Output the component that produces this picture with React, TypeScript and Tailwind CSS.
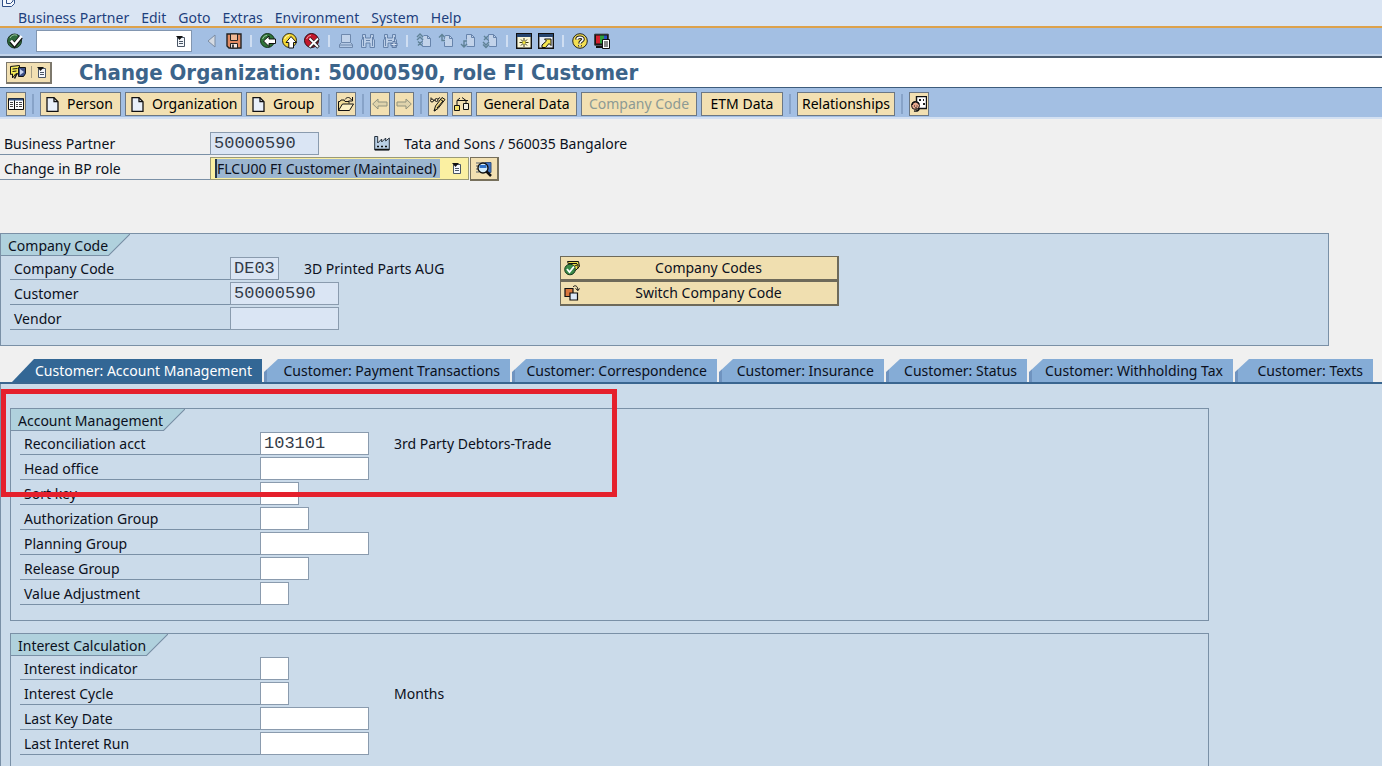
import type { ReactNode } from "react";

const line = "border-[#7a90a6]";

function Svg({ children, w = 16 }: { children: ReactNode; w?: number }) {
  return (
    <svg width={w} height="16" viewBox={`0 0 ${w} 16`} fill="none" stroke="#111" strokeWidth="1" aria-hidden="true">
      {children}
    </svg>
  );
}

const CheckIcon = () => (
  <Svg>
    <circle cx="7.500" cy="8" r="7" fill="#2f6b3c" stroke="#1c3524" />
    <path d="M3 5A6 6 0 0 1 10 2.200" stroke="#9cc7a0" />
    <path d="M4 8l3.500 4L14 4" stroke="#111" strokeWidth="4.500" />
    <path d="M4 7.500l3.500 4L14.500 3" stroke="#fff" strokeWidth="2.600" />
  </Svg>
);
const TriangleIcon = () => (
  <Svg>
    <path d="M11 2v12L4 8z" fill="#d5dbe3" stroke="#7b8ca3" />
  </Svg>
);
const SaveIcon = () => (
  <Svg>
    <path d="M1 1h14v14H3L1 13z" fill="#e08a62" stroke="#222" strokeWidth="1.400" />
    <path d="M4.500 1h7v6.500h-7z" fill="#f0b896" stroke="#222" />
    <path d="M4.500 15v-4.500h7V15z" fill="#f4e6df" stroke="#222" />
    <path d="M6 11.500h2V15H6z" fill="#444" stroke="none" />
  </Svg>
);
const BackIcon = () => (
  <Svg>
    <circle cx="7.500" cy="7.500" r="7" fill="#2f7438" stroke="#14301b" />
    <path d="M2.500 6A5.500 5.500 0 0 1 7 2.200" stroke="#9cc7a0" />
    <path d="M3.500 8L9 3v3h6.500v4.500H9v3z" fill="#fff" stroke="#111" />
  </Svg>
);
const UpIcon = () => (
  <Svg>
    <circle cx="7.500" cy="7.500" r="7" fill="#f5d936" stroke="#2c2810" />
    <path d="M2.500 6A5.500 5.500 0 0 1 7 2.200" stroke="#fdf5b8" />
    <path d="M9 3.500l5.500 6h-3V15H6.800V9.500H4z" fill="#fff" stroke="#111" />
  </Svg>
);
const ExitIcon = () => (
  <Svg>
    <circle cx="7.500" cy="7.500" r="7" fill="#c2182c" stroke="#2e0a10" />
    <path d="M2.500 6A5.500 5.500 0 0 1 7 2.200" stroke="#ee9aa4" />
    <path d="M5.500 5.500l9 9m0-9l-9 9" stroke="#222" strokeWidth="3.500" />
    <path d="M5.500 5.500l8.500 8.500m0-8.500l-8.500 8.500" stroke="#fff" strokeWidth="1.800" />
  </Svg>
);
const PrintIcon = () => (
  <Svg>
    <path d="M3.500 9.500V1.500h9v8" stroke="#6f89ad" fill="#c2d3ea" />
    <path d="M3.500 9.500h9l2 2v3h-13v-3zM1.500 12h13" stroke="#6f89ad" fill="#b3c8e4" />
  </Svg>
);
const Binoculars = () => (
  <path d="M2.500 1.500h3V5h5V1.500h3V6l1 1v7.500H10V10H6v4.500H1.500V7l1-1zM6 7.500h4M3.500 4v9M12.500 4v9" stroke="#6784ac" fill="#bccfe8" />
);
const FindIcon = () => (
  <Svg>
    <Binoculars />
  </Svg>
);
const FindNextIcon = () => (
  <Svg>
    <Binoculars />
    <path d="M12 8v7M8.500 11.500h7" stroke="#5e7ba5" strokeWidth="3" />
    <path d="M12 9v5M9.500 11.500h5" stroke="#dbe6f5" />
  </Svg>
);
function PageIcon({ arrows, low }: { arrows: string; low?: boolean }) {
  return (
    <Svg>
      <path d={low ? "M6.500 13.500v-12h5l3 3v9z" : "M6.500 13.500v-11h5l3 3v8z"} stroke="#6784ac" fill="#c2d3ea" />
      <path d={low ? "M11.500 1.500v3h3" : "M11.500 2.500v3h3"} stroke="#6784ac" />
      <path d={arrows} stroke="#a3bfe4" strokeWidth="3" />
      <path d={arrows} stroke="#5f8296" strokeWidth="1.400" />
    </Svg>
  );
}
const FirstPageIcon = () => <PageIcon arrows="M1 4l3-3 3 3M1 7l3-3 3 3M2 8.500l4 4M6 8.500l-4 4" />;
const PrevPageIcon = () => <PageIcon arrows="M1 4.500l3-3 3 3M4 2v5.500h3" />;
const NextPageIcon = () => <PageIcon low arrows="M1 11l3 3 3-3M4 13.500V8h3" />;
const LastPageIcon = () => <PageIcon low arrows="M2 3l4 4M6 3l-4 4M1 9l3 3 3-3M1 11.500l3 3 3-3" />;
const NewSessionIcon = () => (
  <Svg>
    <path d="M.7.700h14.600v14.600H.7z" fill="#fbf7d6" stroke="#111" strokeWidth="1.400" />
    <path d="M1 1h14v3H1z" fill="#26456f" stroke="none" />
    <path d="M8 5v9M3.500 9.500h9M5 6.500l6 6m0-6l-6 6" stroke="#3c3b10" />
    <circle cx="8" cy="9.500" r="1.500" fill="#f1e53c" stroke="none" />
  </Svg>
);
const ShortcutIcon = () => (
  <Svg>
    <path d="M.7.700h14.600v14.600H.7z" fill="#e7edf5" stroke="#111" strokeWidth="1.400" />
    <path d="M1 1h14v3H1z" fill="#26456f" stroke="none" />
    <path d="M4 14.500V12l4.500-4L6.500 6h6.500v6.500l-2-2L7.500 14.500z" fill="#f5e650" stroke="#111" />
  </Svg>
);
const HelpIcon = () => (
  <Svg>
    <circle cx="8" cy="8" r="7.300" fill="#f3df52" stroke="#222" />
    <path d="M5 6.500C5 3.500 11 3.500 11 6.200 11 8.200 8 8 8 10.500M8 12v1.500" stroke="#222" strokeWidth="3.600" />
    <path d="M5 6.500C5 3.500 11 3.500 11 6.200 11 8.200 8 8 8 10.500M8 12v1.500" stroke="#fff" strokeWidth="1.600" />
  </Svg>
);
const MonitorIcon = () => (
  <Svg>
    <path d="M.7 1.200h13.600v11H.7z" fill="#111" stroke="#333" />
    <path d="M2 2.500h4v8H2z" fill="#d6202e" stroke="none" />
    <path d="M6 2.500h4v8H6z" fill="#2e9f3c" stroke="none" />
    <path d="M10 2.500h3v8h-3z" fill="#274fc0" stroke="none" />
    <path d="M2 14h7" strokeWidth="2" />
    <path d="M8.500 6.500h7v9h-7z" fill="#fff" />
    <path d="M10 9h4M10 11h4M10 13h4" />
  </Svg>
);
const DropIcon = () => (
  <svg width="10" height="11" viewBox="0 0 10 11" fill="none" stroke="#4a5665" aria-hidden="true">
    <path d="M1.500 1.500h7v9h-7z" fill="#f5f8fc" />
    <path d="M3 5.500h4M3 7.500h4" />
    <path d="M0 0h7L3.500 4z" fill="#111" stroke="none" />
  </svg>
);
const ServicesIcon = () => (
  <Svg>
    <path d="M.5 2.500l9-1v8l-4 .5-3 4v-4l-2 .500z" fill="#f3ea58" />
    <path d="M2.500 5l5-.500M2.500 7.500l4-.500" />
    <path d="M8.500 3.500h7v6l-2 3h-5z" fill="#3c4f86" />
    <path d="M10 5l4 3-4 3z" fill="#c9d4ee" stroke="none" />
    <path d="M7 9.500l-2.500 5" strokeWidth="1.500" />
  </Svg>
);
const LayoutIcon = () => (
  <Svg>
    <path d="M.5 2.500h15v11H.5zM6.500 2.500v11" fill="#fff" />
    <path d="M1 3.500h14" stroke="#33507c" strokeWidth="2" />
    <path d="M2 6.500h3M2 8.500h3M2 10.500h3M8 6.500h2m1 0h3M8 8.500h2m1 0h3M8 10.500h2m1 0h3" stroke="#444" />
  </Svg>
);
const NewIcon = () => (
  <svg width="13" height="15" viewBox="0 0 13 15" fill="none" stroke="#111" aria-hidden="true">
    <path d="M1 .700h7l4 4v9.600H1z" fill="#eaf1fa" strokeWidth="1.300" />
    <path d="M8 .700v4h4" strokeWidth="1.300" />
  </svg>
);
const OpenIcon = () => (
  <Svg>
    <path d="M.5 14.500V5.500h1.500l1-1.500h3l1 1.500h4v2" fill="#f0dc9a" />
    <path d="M.5 14.500l4-6.500h11l-4 6.500z" fill="#fbf0c4" />
    <path d="M7 3.500c2-3 5-2.500 6.500.500M14.500 1v4h-4" />
  </Svg>
);
const LeftIcon = () => (
  <Svg>
    <path d="M.7 8L6 3v3h9v4H6v3z" fill="#dfd3ac" stroke="#91937f" />
  </Svg>
);
const RightIcon = () => (
  <Svg>
    <path d="M15.300 8L10 3v3H1v4h9v3z" fill="#dfd3ac" stroke="#91937f" />
  </Svg>
);
const EditIcon = () => (
  <Svg>
    <path d="M4 15l1.500-5L12 1.500l3 2-7 9z" fill="#f2d98a" />
    <path d="M4 15l2-1M10.500 3.500l3 2M7 12l6-7" />
    <circle cx="2" cy="4.500" r="1.500" />
    <circle cx="6.500" cy="4" r="1.500" />
    <path d="M3.500 4.500L5 4M8 3l2-1.500M1 3V1.500" />
  </Svg>
);
const HierarchyIcon = () => (
  <Svg>
    <path d="M.5 9.500h5v5h-5z" fill="#f5e26a" />
    <path d="M9.500 7.500h5v6h-5z" fill="#f3efe0" />
    <path d="M3 9V4.500h7M6 2l-3 2.500M8 1.500l4 3V7M10 4.500h4" />
  </Svg>
);
const RoleIcon = () => (
  <Svg>
    <path d="M5.500.500h10v12h-10z" fill="#fff" strokeWidth="1.400" />
    <path d="M8 3h2v2H8zM12 3h1v2h-1zM12 7h2v2h-2z" fill="#222" stroke="none" />
    <circle cx="4.500" cy="9.500" r="4" fill="#e9a98d" />
    <path d="M1 9c1-4 5-4 7-1M3 15c3 .500 5-.500 5.500-3" strokeWidth="1.400" />
    <path d="M3 10h1M5.500 10h1M4 12h2" />
  </Svg>
);
const FactoryIcon = () => (
  <Svg>
    <path d="M.7 15V1.500h3V8l4-4v3l4-4v3l3.600-3v12z" fill="#b9cfe6" stroke="#26303c" />
    <path d="M1 14.500h14M3 11.500h2m2 0h2m2 0h2" strokeWidth="1.500" />
  </Svg>
);
const SearchPageIcon = () => (
  <Svg>
    <path d="M0 2h9M0 5h2M0 8h2M0 11h3" stroke="#55606e" />
    <path d="M9 1.500h6v10H9z" fill="#3f73c4" stroke="#33507c" />
    <circle cx="7" cy="7" r="5" fill="#d3ecfa" strokeWidth="1.400" />
    <path d="M3.500 5.500h7" stroke="#2f72c9" strokeWidth="3" />
    <path d="M10.500 10.500l4.500 4.500" strokeWidth="2.500" />
  </Svg>
);
const CheckCodesIcon = () => (
  <Svg>
    <path d="M3.500 1.500h11l1 5-4 4-5-1z" fill="#e6d94a" />
    <path d="M5 3.500h8M10 6.500l4-2v4" />
    <circle cx="6" cy="9.500" r="5.300" fill="#3a8a48" stroke="#173a1f" />
    <path d="M3 9l2.500 3L10 6.500" stroke="#fff" strokeWidth="1.800" />
  </Svg>
);
const SwitchIcon = () => (
  <Svg>
    <path d="M1 3.500h8v8H1z" fill="#d9773d" strokeWidth="1.200" />
    <path d="M6 8h7.500v7H6z" fill="#dbe8f7" strokeWidth="1.200" />
    <path d="M9 2c2-2.500 5-1 5 3.500M11.500 3.500l2.500 2 1.500-2" />
  </Svg>
);

const mainTools: ([string, () => ReactNode] | null)[] = [
  ["Collapse", TriangleIcon],
  ["Save", SaveIcon],
  null,
  ["Back", BackIcon],
  ["Exit", UpIcon],
  ["Cancel", ExitIcon],
  null,
  ["Print", PrintIcon],
  ["Find", FindIcon],
  ["Find next", FindNextIcon],
  null,
  ["First page", FirstPageIcon],
  ["Previous page", PrevPageIcon],
  ["Next page", NextPageIcon],
  ["Last page", LastPageIcon],
  null,
  ["New session", NewSessionIcon],
  ["Create shortcut", ShortcutIcon],
  null,
  ["Help", HelpIcon],
  ["Customize layout", MonitorIcon],
];

function ToolButton({ label, children }: { label: string; children: ReactNode }) {
  return (
    <button aria-label={label} className="flex h-6 w-5 shrink-0 items-center justify-center border border-[#6b7784] bg-[#f2e0b2]">
      {children}
    </button>
  );
}

function TextButton({ text, width, page, disabled }: { text: string; width: string; page?: boolean; disabled?: boolean }) {
  return (
    <button
      disabled={disabled}
      className={`flex h-6 shrink-0 items-center border border-[#6b7784] bg-[#f2e0b2] whitespace-nowrap ${width} ${page ? "gap-2 pl-[5px]" : "justify-center"} ${disabled ? "text-[#8c9a94]" : "text-black"}`}
    >
      {page && <NewIcon />}
      {text}
    </button>
  );
}

const Divider = () => (
  <span className="flex h-5 w-[6px] shrink-0 justify-center">
    <span className="w-[2px] bg-[#87a3c8]" />
  </span>
);

type FieldProps = {
  id: string;
  label: string;
  labelWidth: string;
  width: string;
  value?: string;
  readOnly?: boolean;
  note?: string;
  noteGap?: string;
};

function Field({ id, label, labelWidth, width, value = "", readOnly, note, noteGap = "" }: FieldProps) {
  return (
    <div className="flex h-[23px] items-stretch">
      <label htmlFor={id} className={`shrink-0 border-b pl-1 leading-6 whitespace-nowrap ${line} ${labelWidth}`}>
        {label}
      </label>
      <input
        id={id}
        defaultValue={value}
        readOnly={readOnly}
        className={`shrink-0 border border-[#8a9bae] pl-[3px] font-['Liberation_Mono',monospace] text-[17px] leading-5 text-[#333b48] outline-none ${width} ${readOnly ? "bg-[#dae5f4]" : "bg-white"}`}
      />
      {note && <span className={`leading-6 whitespace-nowrap ${noteGap}`}>{note}</span>}
    </div>
  );
}

function Group({ title, children, className }: { title: string; children: ReactNode; className: string }) {
  return (
    <section className={`border bg-[#cbdbea] ${line} ${className}`}>
      <header className="flex h-[22px]">
        <h2 className={`border-b bg-[#b0d1dd] pl-[7px] leading-6 whitespace-nowrap ${line}`}>{title}</h2>
        <span className="w-[22px] bg-[linear-gradient(to_bottom_right,#b0d1dd_calc(50%-1px),#7a90a6_50%,transparent_calc(50%+1px))]" />
      </header>
      {children}
    </section>
  );
}

const tabs = [
  { text: "Payment Transactions", width: "w-[246px]" },
  { text: "Correspondence", width: "w-[205px]" },
  { text: "Insurance", width: "w-[165px]" },
  { text: "Status", width: "w-[141px]" },
  { text: "Withholding Tax", width: "w-[204px]" },
  { text: "Texts", width: "w-[138px]" },
];

export default function App() {
  return (
    <div className="flex min-h-screen flex-col overflow-hidden bg-[#f0f0f0] font-['Noto_Sans',sans-serif] text-sm text-[#0b1020]">
      <div className="h-2 bg-[#dae5f3] pl-[2px]">
        <svg width="14" height="8" viewBox="0 0 14 8" fill="none" stroke="#2f4f86" aria-hidden="true">
          <path d="M.5 0v6.500h9L12.500 3.500V0M4.500 0v3.500h4L11 1V0" fill="#f4f8fd" />
        </svg>
      </div>
      <nav className="flex h-[18px] items-start gap-3 bg-[#dae5f3] pl-[18px] text-[#1d3f7d]">
        {["Business Partner", "Edit", "Goto", "Extras", "Environment", "System", "Help"].map((m) => (
          <button key={m} className="leading-5">
            {m}
          </button>
        ))}
      </nav>

      <div className="flex h-[30px] items-center border-t-2 border-b-2 border-t-[#dda24b] border-b-[#c3d5ec] bg-[#a3bfe3]">
        <button aria-label="Enter" className="flex w-9 justify-center pr-[6px]">
          <CheckIcon />
        </button>
        <div className="flex h-[22px] w-[156px] items-center border border-[#8296b0] bg-white pr-[5px]">
          <input aria-label="Command" className="min-w-0 flex-1 pl-1 outline-none" />
          <DropIcon />
        </div>
        <span className="w-[9px]" />
        {mainTools.map((t, i) => {
          if (!t) {
            return (
              <span key={i} className="flex w-3 justify-center">
                <span className="h-3 w-[2px] bg-[#cfdef2]" />
              </span>
            );
          }
          const Icon = t[1];
          return (
            <button key={i} aria-label={t[0]} className="flex w-[22px] justify-center">
              <Icon />
            </button>
          );
        })}
      </div>

      <header className="flex h-8 items-center border-t-2 border-b border-t-[#4b5c70] border-b-[#3d5c7c] bg-white pl-[6px]">
        <button aria-label="Services for object" className="flex h-[22px] w-[46px] items-center border border-r-2 border-b-2 border-[#7d786c] bg-[#f2e0b2] pl-[3px]">
          <ServicesIcon />
          <span className="mx-[5px] h-3 w-px bg-[#a79f85]" />
          <DropIcon />
        </button>
        <h1 className="pl-[27px] font-['DejaVu_Sans_Condensed',sans-serif] text-[22px] leading-7 font-bold whitespace-nowrap text-[#3c648a]">
          Change Organization: 50000590, role FI Customer
        </h1>
      </header>

      <div className="flex h-[31px] items-center gap-1 border-b-2 border-[#d3e0f2] bg-[#a3bfe3] pt-[3px] pl-[6px]">
        <ToolButton label="Locator">
          <LayoutIcon />
        </ToolButton>
        <Divider />
        <TextButton page text="Person" width="w-[81px]" />
        <TextButton page text="Organization" width="w-[117px]" />
        <TextButton page text="Group" width="w-[76px]" />
        <Divider />
        <ToolButton label="Open">
          <OpenIcon />
        </ToolButton>
        <Divider />
        <ToolButton label="Previous partner">
          <LeftIcon />
        </ToolButton>
        <ToolButton label="Next partner">
          <RightIcon />
        </ToolButton>
        <Divider />
        <ToolButton label="Display or change">
          <EditIcon />
        </ToolButton>
        <ToolButton label="Switch roles">
          <HierarchyIcon />
        </ToolButton>
        <TextButton text="General Data" width="w-[101px]" />
        <TextButton text="Company Code" width="w-[116px]" disabled />
        <TextButton text="ETM Data" width="w-[82px]" />
        <Divider />
        <TextButton text="Relationships" width="w-[98px]" />
        <Divider />
        <ToolButton label="Partner roles">
          <RoleIcon />
        </ToolButton>
      </div>

      <div className="flex flex-col gap-[2px] pt-[13px]">
        <div className="flex h-[23px] items-start">
          <Field id="partner" label="Business Partner" labelWidth="w-[210px]" width="w-[109px]" value="50000590" readOnly />
          <span className="pt-[3px] pr-[14px] pl-[55px]">
            <FactoryIcon />
          </span>
          <span className="leading-6">Tata and Sons / 560035 Bangalore</span>
        </div>
        <div className="flex h-6 items-start">
          <label htmlFor="role" className={`h-[23px] w-[210px] border-b pl-1 leading-6 ${line}`}>
            Change in BP role
          </label>
          <div className="flex h-[23px] w-[259px] items-center justify-between border border-[#9a9a78] bg-[#fbf0a2] pr-[6px] pl-1">
            <select id="role" defaultValue="flcu00" className="h-[19px] w-[225px] appearance-none border-l-2 border-[#26374d] bg-[#9cb6d0] leading-[19px] whitespace-nowrap outline-none">
              <option value="flcu00">FLCU00 FI Customer (Maintained)</option>
            </select>
            <DropIcon />
          </div>
          <button aria-label="Role details" className="ml-px flex h-6 w-[29px] items-center justify-center border border-r-2 border-b-2 border-[#77705c] bg-[#f2e0b2]">
            <SearchPageIcon />
          </button>
        </div>
      </div>

      <Group title="Company Code" className="mt-[52px] mr-[53px] h-[113px]">
        <div className="flex items-start pl-[9px]">
          <div className="flex w-[550px] flex-col gap-[2px] pt-px">
            <Field id="cc" label="Company Code" labelWidth="w-[220px]" width="w-[49px]" value="DE03" readOnly note="3D Printed Parts AUG" noteGap="pl-[25px]" />
            <Field id="cust" label="Customer" labelWidth="w-[220px]" width="w-[109px]" value="50000590" readOnly />
            <Field id="vendor" label="Vendor" labelWidth="w-[220px]" width="w-[109px]" readOnly />
          </div>
          <div className="flex w-[279px] flex-col">
            <button className="flex h-[25px] items-center border border-r-2 border-b-2 border-[#6e6a5a] bg-[#f0dfb0] pl-[3px]">
              <CheckCodesIcon />
              <span className="flex-1 leading-6">Company Codes</span>
            </button>
            <button className="flex h-[25px] items-center border border-r-2 border-b-2 border-[#6e6a5a] bg-[#f0dfb0] pl-[3px]">
              <SwitchIcon />
              <span className="flex-1 leading-6">Switch Company Code</span>
            </button>
          </div>
        </div>
      </Group>

      <div role="tablist" className="mt-[13px] flex h-[25px] gap-[2px] border-b-2 border-[#3a6690] pl-3">
        <button role="tab" aria-selected="true" className="w-[250px] bg-[#336795] pr-[10px] text-right whitespace-nowrap text-white [clip-path:polygon(22px_0,100%_0,100%_100%,0_100%)]">
          Customer: Account Management
        </button>
        {tabs.map((t) => (
          <button
            key={t.text}
            role="tab"
            className={`bg-[linear-gradient(to_right,#6f93bf_3px,#85acd6_3px)] pr-[10px] text-right whitespace-nowrap [clip-path:polygon(14px_0,100%_0,100%_100%,0_100%,0_13px)] ${t.width}`}
          >
            Customer: {t.text}
          </button>
        ))}
      </div>

      <main className={`relative flex flex-1 flex-col gap-3 border-l bg-[#cbdbea] pt-6 pr-[173px] pl-[9px] ${line}`}>
        <Group title="Account Management" className="h-[213px]">
          <div className="flex flex-col gap-[2px] pt-px pl-[9px]">
            <Field id="recon" label="Reconciliation acct" labelWidth="w-[240px]" width="w-[109px]" value="103101" note="3rd Party Debtors-Trade" noteGap="pl-[25px]" />
            <Field id="head" label="Head office" labelWidth="w-[240px]" width="w-[109px]" />
            <Field id="sort" label="Sort key" labelWidth="w-[240px]" width="w-[39px]" />
            <Field id="auth" label="Authorization Group" labelWidth="w-[240px]" width="w-[49px]" />
            <Field id="plan" label="Planning Group" labelWidth="w-[240px]" width="w-[109px]" />
            <Field id="release" label="Release Group" labelWidth="w-[240px]" width="w-[49px]" />
            <Field id="adjust" label="Value Adjustment" labelWidth="w-[240px]" width="w-[29px]" />
          </div>
        </Group>
        <Group title="Interest Calculation" className="border-b-0 pb-[11px]">
          <div className="flex flex-col gap-[2px] pt-px pl-[9px]">
            <Field id="indicator" label="Interest indicator" labelWidth="w-[240px]" width="w-[29px]" />
            <Field id="cycle" label="Interest Cycle" labelWidth="w-[240px]" width="w-[29px]" note="Months" noteGap="pl-[105px]" />
            <Field id="keydate" label="Last Key Date" labelWidth="w-[240px]" width="w-[109px]" />
            <Field id="lastrun" label="Last Interet Run" labelWidth="w-[240px]" width="w-[109px]" />
          </div>
        </Group>
        <div className="pointer-events-none absolute top-[5px] left-0 h-[108px] w-[616px] border-[5px] border-[#e5202c]" />
      </main>
    </div>
  );
}
